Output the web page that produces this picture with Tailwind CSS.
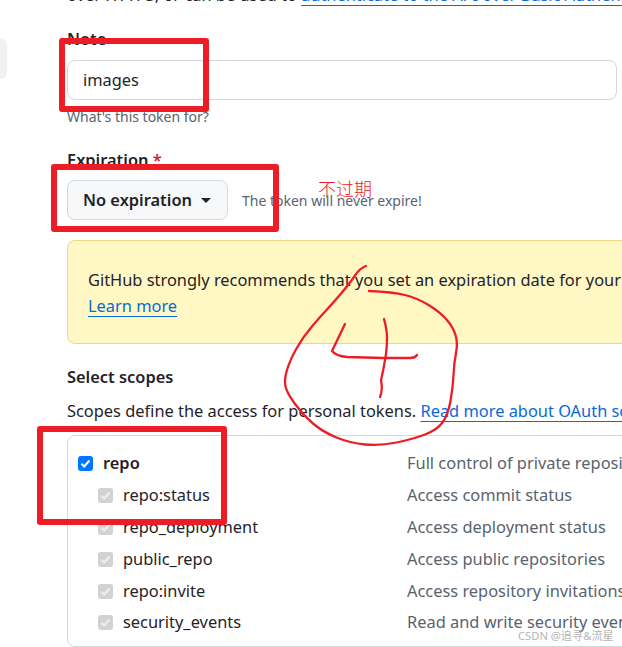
<!DOCTYPE html>
<html lang="en">
<head>
<meta charset="UTF-8">
<title>New personal access token</title>
<script src="https://cdn.jsdelivr.net/npm/@tailwindcss/browser@4"></script>
</head>
<body class="bg-white">
<div class="relative w-[622px] h-[647px] overflow-hidden font-['Noto_Sans','Noto_Sans_CJK_SC',sans-serif] text-[16.4px] text-[#1f2328]">
  <!-- sidebar item cut off at the left -->
  <div class="absolute left-0 top-[39px] w-[7px] h-[40px] bg-[#eff1f3] rounded-r-md"></div>

  <div class="w-[900px] pl-[67px]">
    <div class="h-[24px] -mt-[17px] whitespace-nowrap leading-[24px]">over HTTPS, or can be used to <a class="text-[#0969da] underline underline-offset-4">authenticate to the API over Basic Authentication</a>.</div>

    <label class="block mt-[20px] h-[24px] leading-[24px] font-semibold">Note</label>
    <div class="mt-[9px] w-[550px] h-[40px] border border-[#d1d9e0] rounded-lg pl-[15px] flex items-center text-[#1f2328]">images</div>
    <p class="mt-[7px] text-[14px] leading-[20px] text-[#59636e]">What's this token for?</p>

    <label class="block mt-[21px] h-[24px] leading-[24px] font-semibold">Expiration <span class="text-[#d1242f]">*</span></label>
    <div class="mt-[8px] flex items-center">
      <button class="h-[40px] w-[161px] bg-[#f6f8fa] border border-[#d1d9e0] rounded-lg pl-[15px] flex items-center gap-[9px] font-semibold whitespace-nowrap">No expiration
        <svg width="10" height="5" viewBox="0 0 10 5"><path d="M0 0h10L5 5z" fill="#1f2328"/></svg>
      </button>
      <span class="ml-[14px] text-[14px] text-[#59636e]">The token will never expire!</span>
    </div>

    <div class="mt-[20px] w-[700px] h-[104px] bg-[#fff8c5] border border-[#eed888] rounded-lg pl-[20px] pt-[26px] leading-[26px]">
      <p class="whitespace-nowrap">GitHub strongly recommends that you set an expiration date for your token to help keep your information secure.</p>
      <a class="text-[#0969da] underline underline-offset-4">Learn more</a>
    </div>

    <h3 class="mt-[21px] h-[24px] leading-[24px] font-semibold">Select scopes</h3>
    <p class="mt-[10px] h-[24px] leading-[24px] whitespace-nowrap">Scopes define the access for personal tokens. <a class="text-[#0969da] underline underline-offset-4">Read more about OAuth scopes.</a></p>

    <div class="mt-[12px] w-[800px] h-[212px] border border-[#d1d9e0] rounded-l-lg pl-[10px] pt-[11px]">
      <div class="flex items-center h-[32px]">
        <span class="w-[15px] h-[15px] rounded-[3px] bg-[#0075ff] flex items-center justify-center"><svg width="11" height="11" viewBox="0 0 11 11"><path d="M1.5 5.8 4.2 8.5 9.5 2.5" fill="none" stroke="#fff" stroke-width="2"/></svg></span>
        <span class="ml-[10px] w-[304px] font-semibold">repo</span>
        <span class="text-[#59636e]">Full control of private repositories</span>
      </div>
      <div class="flex items-center h-[32px]">
        <span class="ml-[20px] w-[15px] h-[15px] rounded-[3px] bg-[#d2d2d2] flex items-center justify-center"><svg width="11" height="11" viewBox="0 0 11 11"><path d="M1.5 5.8 4.2 8.5 9.5 2.5" fill="none" stroke="#efefef" stroke-width="2"/></svg></span>
        <span class="ml-[10px] w-[284px]">repo:status</span>
        <span class="text-[#59636e]">Access commit status</span>
      </div>
      <div class="flex items-center h-[32px]">
        <span class="ml-[20px] w-[15px] h-[15px] rounded-[3px] bg-[#d2d2d2] flex items-center justify-center"><svg width="11" height="11" viewBox="0 0 11 11"><path d="M1.5 5.8 4.2 8.5 9.5 2.5" fill="none" stroke="#efefef" stroke-width="2"/></svg></span>
        <span class="ml-[10px] w-[284px]">repo_deployment</span>
        <span class="text-[#59636e]">Access deployment status</span>
      </div>
      <div class="flex items-center h-[32px]">
        <span class="ml-[20px] w-[15px] h-[15px] rounded-[3px] bg-[#d2d2d2] flex items-center justify-center"><svg width="11" height="11" viewBox="0 0 11 11"><path d="M1.5 5.8 4.2 8.5 9.5 2.5" fill="none" stroke="#efefef" stroke-width="2"/></svg></span>
        <span class="ml-[10px] w-[284px]">public_repo</span>
        <span class="text-[#59636e]">Access public repositories</span>
      </div>
      <div class="flex items-center h-[32px]">
        <span class="ml-[20px] w-[15px] h-[15px] rounded-[3px] bg-[#d2d2d2] flex items-center justify-center"><svg width="11" height="11" viewBox="0 0 11 11"><path d="M1.5 5.8 4.2 8.5 9.5 2.5" fill="none" stroke="#efefef" stroke-width="2"/></svg></span>
        <span class="ml-[10px] w-[284px]">repo:invite</span>
        <span class="text-[#59636e]">Access repository invitations</span>
      </div>
      <div class="flex items-center h-[31px]">
        <span class="ml-[20px] w-[15px] h-[15px] rounded-[3px] bg-[#d2d2d2] flex items-center justify-center"><svg width="11" height="11" viewBox="0 0 11 11"><path d="M1.5 5.8 4.2 8.5 9.5 2.5" fill="none" stroke="#efefef" stroke-width="2"/></svg></span>
        <span class="ml-[10px] w-[284px]">security_events</span>
        <span class="text-[#59636e]">Read and write security events</span>
      </div>
    </div>
  </div>

  <!-- red annotations drawn on top of the screenshot -->
  <div class="absolute left-[59px] top-[38px] w-[150px] h-[74px] border-[6px] border-[#ee1c25] rounded-[3px]"></div>
  <div class="absolute left-[51px] top-[164px] w-[228px] h-[68px] border-[6px] border-[#ee1c25] rounded-[3px]"></div>
  <div class="absolute left-[37px] top-[426px] w-[190px] h-[99px] border-[6px] border-[#ee1c25] rounded-[3px]"></div>
  <span class="absolute left-[318px] top-[177px] text-[18px] leading-[22px] text-[#ee1c25] font-['Noto_Sans_CJK_SC',sans-serif] font-light">不过期</span>
  <svg class="absolute left-0 top-0" width="622" height="647" viewBox="0 0 622 647" fill="none" stroke="#ee1c25" stroke-width="2.3" stroke-linecap="round" stroke-linejoin="round">
    <path d="M366 266Q360 268 355 275.5Q350 283 341.5 293Q333 303 326.5 310Q320 317 311.5 327Q303 337 296.5 348.5Q290 360 287 370Q284 380 285.5 386.5Q287 393 295 404Q303 415 313 423.5Q323 432 336.5 437.5Q350 443 365 444.5Q380 446 396.5 442.5Q413 439 425 434.5Q437 430 442.5 422.5Q448 415 450.5 401Q453 387 453.5 375Q454 363 456 353Q458 343 455.5 335Q453 327 446.5 319.5Q440 312 428.5 305Q417 298 405 295Q393 292 369 291"/>
    <path d="M345 324L332 351Q336 356 347 357L383 358L410 358Q415 358 417 355"/>
    <path d="M384 319Q387 330 387 337Q387 350 385 360Q383 372 381 380Q383 390 380 397"/>
  </svg>

  <span class="absolute left-[518px] top-[628px] text-[11.2px] leading-[16px] text-[#b5b5b5] font-['Noto_Sans','Noto_Sans_CJK_SC',sans-serif] whitespace-nowrap">CSDN @追寻&amp;流星</span>
</div>
</body>
</html>
